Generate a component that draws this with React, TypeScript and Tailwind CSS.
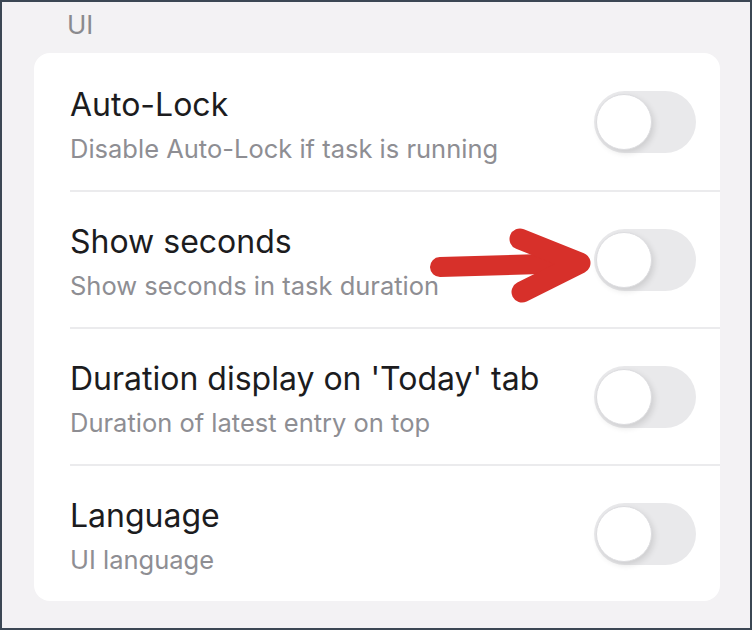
const rows = [
  { title: "Auto-Lock", sub: "Disable Auto-Lock if task is running" },
  { title: "Show seconds", sub: "Show seconds in task duration" },
  { title: "Duration display on 'Today' tab", sub: "Duration of latest entry on top" },
  { title: "Language", sub: "UI language" },
];

function Toggle() {
  return (
    <div className="relative w-[102px] h-[62px] rounded-full bg-[#e9e9eb] shrink-0">
      <div className="absolute left-[2px] top-[3px] w-[56px] h-[56px] rounded-full bg-white border border-[#dcdcdf] shadow-[2px_3px_6px_rgba(0,0,0,0.12)]" />
    </div>
  );
}

export default function App() {
  return (
    <div
      className="relative w-[752px] h-[630px] bg-[#f3f2f4] border-2 border-[#3b4754] overflow-hidden"
      style={{ fontFamily: "Inter, 'Noto Sans', sans-serif" }}
    >
      <div className="pl-[65px] pt-[5px] h-[51px] text-[26px] leading-[36px] text-[#8a8a8e]">UI</div>
      <div className="ml-[32px] w-[686px] bg-white rounded-[16px] overflow-hidden">
        {rows.map((r, i) => (
          <div key={i} className="pl-[36px]">
            <div className={"flex items-center h-[137px] pr-[24px] " + (i > 0 ? "border-t-2 border-[#ebebed]" : "")}>
              <div className={"flex-1 self-start flex flex-col " + (i > 0 ? "pt-[31px]" : "pt-[33px]")}>
                <div className="text-[32px] leading-[38px] text-[#1c1c1e]">{r.title}</div>
                <div className="mt-[10px] text-[25.5px] leading-[30px] text-[#8e8e93]">{r.sub}</div>
              </div>
              <Toggle />
            </div>
          </div>
        ))}
      </div>
      <svg className="absolute left-0 top-0" width="752" height="630" viewBox="0 0 752 630">
        <line x1="438" y1="265" x2="572" y2="261" stroke="#d7302a" strokeWidth="20" strokeLinecap="round" />
        <polyline points="518,237 578,261 520,290" fill="none" stroke="#d7302a" strokeWidth="21" strokeLinecap="round" strokeLinejoin="round" />
      </svg>
    </div>
  );
}
